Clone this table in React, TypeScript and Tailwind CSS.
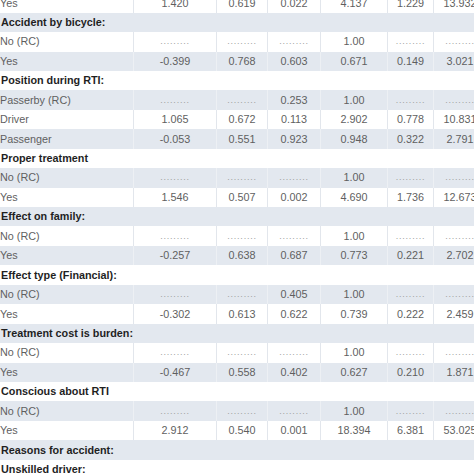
import React from "react";

type Row =
  | { kind: "h"; label: string }
  | { kind: "d"; label: string; v: string[] };

const D = ".........";

const rows: Row[] = [
  { kind: "d", label: "Yes", v: ["1.420", "0.619", "0.022", "4.137", "1.229", "13.932"] },
  { kind: "h", label: "Accident by bicycle:" },
  { kind: "d", label: "No (RC)", v: [D, D, D, "1.00", D, D] },
  { kind: "d", label: "Yes", v: ["-0.399", "0.768", "0.603", "0.671", "0.149", "3.021"] },
  { kind: "h", label: "Position during RTI:" },
  { kind: "d", label: "Passerby (RC)", v: [D, D, "0.253", "1.00", D, D] },
  { kind: "d", label: "Driver", v: ["1.065", "0.672", "0.113", "2.902", "0.778", "10.831"] },
  { kind: "d", label: "Passenger", v: ["-0.053", "0.551", "0.923", "0.948", "0.322", "2.791"] },
  { kind: "h", label: "Proper treatment" },
  { kind: "d", label: "No (RC)", v: [D, D, D, "1.00", D, D] },
  { kind: "d", label: "Yes", v: ["1.546", "0.507", "0.002", "4.690", "1.736", "12.673"] },
  { kind: "h", label: "Effect on family:" },
  { kind: "d", label: "No (RC)", v: [D, D, D, "1.00", D, D] },
  { kind: "d", label: "Yes", v: ["-0.257", "0.638", "0.687", "0.773", "0.221", "2.702"] },
  { kind: "h", label: "Effect type (Financial):" },
  { kind: "d", label: "No (RC)", v: [D, D, "0.405", "1.00", D, D] },
  { kind: "d", label: "Yes", v: ["-0.302", "0.613", "0.622", "0.739", "0.222", "2.459"] },
  { kind: "h", label: "Treatment cost is burden:" },
  { kind: "d", label: "No (RC)", v: [D, D, D, "1.00", D, D] },
  { kind: "d", label: "Yes", v: ["-0.467", "0.558", "0.402", "0.627", "0.210", "1.871"] },
  { kind: "h", label: "Conscious about RTI" },
  { kind: "d", label: "No (RC)", v: [D, D, D, "1.00", D, D] },
  { kind: "d", label: "Yes", v: ["2.912", "0.540", "0.001", "18.394", "6.381", "53.025"] },
  { kind: "h", label: "Reasons for accident:" },
  { kind: "h", label: "Unskilled driver:" },
];

const widths = ["w-[83px]", "w-[51px]", "w-[53px]", "w-[67px]", "w-[46px]", "w-[52px]"];

export default function App() {
  return (
    <div
      className="w-[474px] h-[474px] overflow-hidden bg-white"
      style={{ fontFamily: '"Liberation Sans", Arial, sans-serif' }}
    >
      <div className="mt-[-6.8px] w-[486px]">
        {rows.map((r, i) => {
          const shaded = i % 2 === 1;
          const bg = shaded ? "bg-[#e3e8ef]" : "bg-white";
          const border = shaded ? "border-[#edf0f4]" : "border-[#e2e6ec]";
          if (r.kind === "h") {
            return (
              <div key={i} className={`flex items-center h-[19.45px] ${bg}`}>
                <span className="pl-[1px] text-[10.8px] font-bold text-[#1f1f1f] leading-none">
                  {r.label}
                </span>
              </div>
            );
          }
          return (
            <div key={i} className={`flex h-[19.45px] ${bg}`}>
              <div className={`w-[134px] flex items-center border-r ${border}`}>
                <span className="text-[10.8px] text-[#5f5f5f] leading-none">{r.label}</span>
              </div>
              {r.v.map((v, j) => (
                <div
                  key={j}
                  className={`${widths[j]} flex items-center justify-center ${j < 5 ? "border-r" : ""} ${border}`}
                >
                  {v === D ? (
                    <span className="text-[9px] tracking-[0.8px] text-[#a0a0a0] leading-none">{v}</span>
                  ) : (
                    <span className="text-[10.8px] text-[#5f5f5f] leading-none">{v}</span>
                  )}
                </div>
              ))}
            </div>
          );
        })}
      </div>
    </div>
  );
}
